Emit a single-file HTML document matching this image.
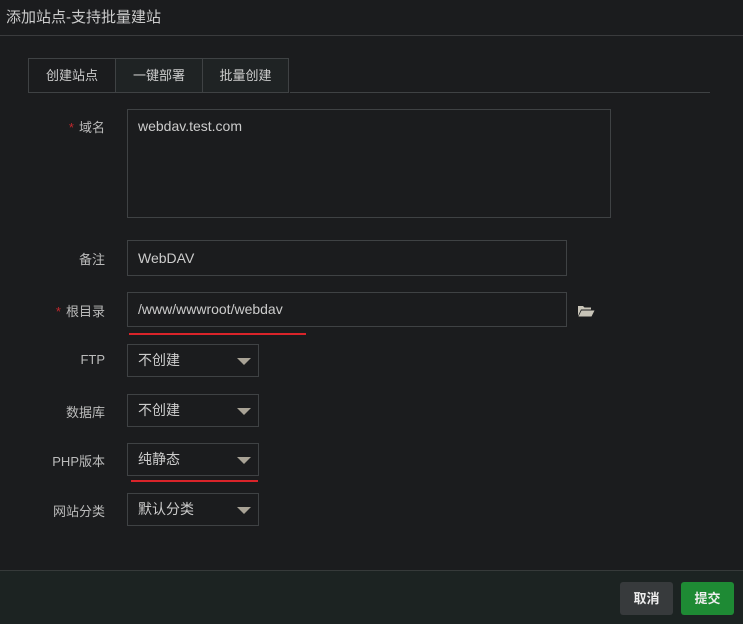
<!DOCTYPE html>
<html><head><meta charset="utf-8"><style>
*{box-sizing:border-box;margin:0;padding:0}
body{width:743px;height:624px;background:#1b1c1e;font-family:"Liberation Sans","Noto Sans CJK SC",sans-serif;font-size:14px;color:#ccc;position:relative;overflow:hidden}
.a{position:absolute}
.title{left:6px;top:6px;font-size:15px;color:#ccc}
.hr{left:0;top:35px;width:743px;height:1px;background:#3a3b3d}
.tabs{left:28px;top:58px;height:35px;display:flex}
.tab{width:87px;height:35px;border:1px solid #3f4244;border-right:none;text-align:center;line-height:34px;font-size:13px;color:#ccc;background:#1f2324}
.tab:first-child{background:#1b1c1e}
.tab:last-child{border-right:1px solid #3f4244}
.tabline{left:290px;top:92px;width:420px;height:1px;background:#3f4244}
.lbl{width:76px;text-align:right;font-size:13px;color:#bbb;left:29px}
.lbl b{color:#c0282d;font-weight:normal;margin-right:5px}
.in{border:1px solid #3f4244;background:#1b1c1e;color:#ccc;font-size:14px;padding-left:10px}
.sel{left:127px;width:132px;height:33px;line-height:31px}
.sel:after{content:"";position:absolute;right:7px;top:13px;border-left:7px solid transparent;border-right:7px solid transparent;border-top:7px solid #a9a396}
.red{height:2px;background:#d9242a}
.foot{left:0;top:570px;width:743px;height:54px;background:#1c2322;border-top:1px solid #363a3a}
.btn{top:582px;height:33px;line-height:33px;border-radius:3px;font-size:13px;font-weight:bold;color:#eee;text-align:center}
</style></head><body>
<div class="a title">添加站点-支持批量建站</div>
<div class="a hr"></div>
<div class="a tabs"><div class="tab">创建站点</div><div class="tab">一键部署</div><div class="tab">批量创建</div></div>
<div class="a tabline"></div>

<div class="a lbl" style="top:117px"><b>*</b>域名</div>
<div class="a in" style="left:127px;top:109px;width:484px;height:109px;padding-top:8px">webdav.test.com</div>

<div class="a lbl" style="top:249px">备注</div>
<div class="a in" style="left:127px;top:240px;width:440px;height:36px;line-height:34px">WebDAV</div>

<div class="a lbl" style="top:301px"><b>*</b>根目录</div>
<div class="a in" style="left:127px;top:292px;width:440px;height:35px;line-height:33px">/www/wwwroot/webdav</div>
<svg class="a" style="left:577px;top:305px" width="18" height="12" viewBox="0 0 18 12"><path d="M1 1h5l1.5 1.5H14v2H4L1 11z" fill="#c8c4b8"/><path d="M4.5 5.5H17.5L14.5 11.5H1.5z" fill="#c8c4b8"/></svg>
<div class="a red" style="left:129px;top:333px;width:177px"></div>

<div class="a lbl" style="top:352px">FTP</div>
<div class="a in sel" style="top:344px">不创建</div>
<div class="a lbl" style="top:402px">数据库</div>
<div class="a in sel" style="top:394px">不创建</div>
<div class="a lbl" style="top:451px">PHP版本</div>
<div class="a in sel" style="top:443px">纯静态</div>
<div class="a red" style="left:131px;top:480px;width:127px"></div>
<div class="a lbl" style="top:501px">网站分类</div>
<div class="a in sel" style="top:493px">默认分类</div>

<div class="a foot"></div>
<div class="a btn" style="left:620px;width:53px;background:#373a3c">取消</div>
<div class="a btn" style="left:681px;width:53px;background:#1e8a34">提交</div>
</body></html>
